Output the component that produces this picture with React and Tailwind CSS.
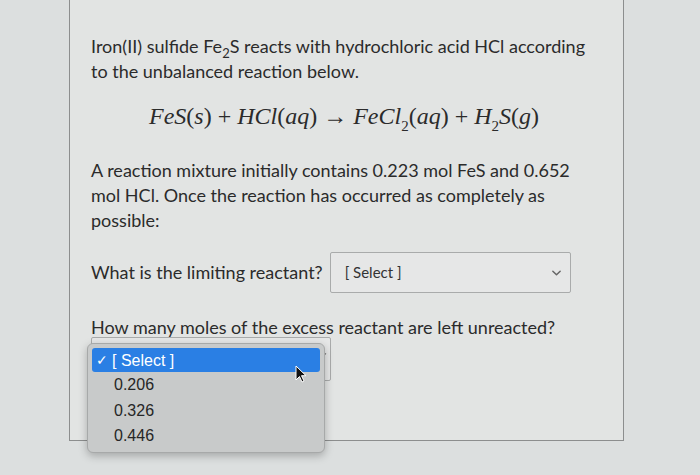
import React from 'react';

const Chevron = ({ className }) => (
  <svg viewBox="0 0 12 8" className={className} fill="none" stroke="currentColor" strokeWidth="1.6" strokeLinecap="round" strokeLinejoin="round">
    <path d="M2 2l4 4 4-4" />
  </svg>
);

const options = ['0.206', '0.326', '0.446'];

export default function App() {
  return (
    <div className="w-[700px] h-[475px] overflow-hidden bg-[#dcdfdf] pl-[69px]" style={{ fontFamily: 'Lato, "Open Sans", sans-serif' }}>
      <div className="w-[555px] h-[441px] bg-[#e2e4e3] border-x border-b border-[#8c8e8e] pl-[21px] pt-[34px] text-[#2b2b2b] text-[18px] leading-[25px]">
        <p className="w-[502px]">
          Iron(II) sulfide Fe<sub className="text-[13px] leading-none align-[-2px]">2</sub>S reacts with hydrochloric acid HCl according to the unbalanced reaction below.
        </p>

        <div className="mt-[18px] ml-[58px] text-[24px] leading-[28px]" style={{ fontFamily: '"Liberation Serif", "DejaVu Serif", serif' }}>
          <i>FeS</i>(<i>s</i>) + <i>HCl</i>(<i>aq</i>) → <i>FeCl</i><sub className="text-[15px] leading-none align-[-3px]">2</sub>(<i>aq</i>) + <i>H</i><sub className="text-[15px] leading-none align-[-3px]">2</sub><i>S</i>(<i>g</i>)
        </div>

        <p className="mt-[28px] w-[488px]">
          A reaction mixture initially contains 0.223 mol FeS and 0.652 mol HCl. Once the reaction has occurred as completely as possible:
        </p>

        <div className="mt-[19px] flex items-center">
          <span>What is the limiting reactant?</span>
          <div className="ml-[7px] w-[241px] h-[41px] border border-[#a9abab] rounded-[2px] bg-[#e6e7e7] flex items-center justify-between pl-[14px] pr-[8px]">
            <span className="text-[15px] text-[#333]">[ Select ]</span>
            <Chevron className="w-[11px] h-[8px] text-[#666]" />
          </div>
        </div>

        <p className="mt-[22px]">How many moles of the excess reactant are left unreacted?</p>

        <div className="relative -mt-[3px] w-[240px] h-[44px] border border-[#a9abab] rounded-[2px] bg-[#e6e7e7] flex items-center justify-end pr-[3px]">
          <Chevron className="w-[8px] h-[8px] text-[#777] -mt-[8px]" />
          <div className="absolute left-[-5px] top-[5px] w-[238px] h-[110px] rounded-[6px] bg-[#c8caca] border border-[#a7a9a9] shadow-[0_3px_8px_rgba(0,0,0,0.25)] p-[4px]" style={{ fontFamily: '"Liberation Sans", Arial, sans-serif' }}>
            <div className="h-[24px] rounded-[3px] bg-[#2a7fe4] text-white text-[16px] flex items-center pl-[4px]">
              <span className="text-[14px] mr-[4px]">✓</span>[ Select ]
            </div>
            {options.map((o) => (
              <div key={o} className="h-[25.5px] flex items-center pl-[22px] text-[16px] text-[#262626]">{o}</div>
            ))}
          </div>
          <svg viewBox="0 0 12 18" className="absolute left-[203px] top-[27px] w-[12px] h-[18px]">
            <path d="M1 1v14l3.5-3.5 2.5 5.5 2-1-2.5-5.3H11z" fill="#111" stroke="#fff" strokeWidth="1" strokeLinejoin="round" />
          </svg>
        </div>
      </div>
    </div>
  );
}
